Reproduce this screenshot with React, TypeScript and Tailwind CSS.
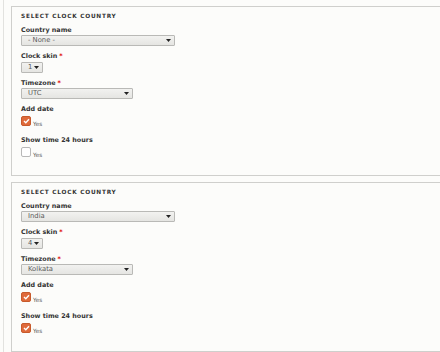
import React from "react";

const font = { fontFamily: '"DejaVu Sans", Verdana, sans-serif' } as const;

function Arrow() {
  return (
    <svg width="5" height="3" viewBox="0 0 5 3" className="shrink-0">
      <path d="M0 0 L5 0 L2.5 3 Z" fill="#222" />
    </svg>
  );
}

function Select({ value, w }: { value: string; w: string }) {
  return (
    <div
      className={`${w} h-[11px] flex items-center justify-between pl-[6px] pr-[3px] border border-[#b9b9b6] rounded-[1px] bg-gradient-to-b from-[#f2f2f0] to-[#e5e5e2] text-[6.8px] leading-[9px] text-[#5a5a5a]`}
    >
      <span>{value}</span>
      <Arrow />
    </div>
  );
}

function Label({ text, req }: { text: string; req?: boolean }) {
  return (
    <div className="h-[10px] leading-[10px] text-[6.4px] font-bold text-[#333]">
      {text}
      {req && <span className="text-[#e01010] ml-[2px]">*</span>}
    </div>
  );
}

function Check({ checked }: { checked: boolean }) {
  return (
    <div className="h-[10px] flex items-end gap-[2px]">
      {checked ? (
        <div className="w-[10px] h-[10px] rounded-[2px] bg-[#df6a3a] border border-[#c75a2c] flex items-center justify-center">
          <svg width="7" height="6" viewBox="0 0 7 6">
            <path d="M1 3 L2.8 4.8 L6 1.2" stroke="#fff" strokeWidth="1.4" fill="none" />
          </svg>
        </div>
      ) : (
        <div className="w-[10px] h-[10px] rounded-[2px] bg-white border border-[#b8b8b8]" />
      )}
      <span className="text-[5.7px] leading-[7px] text-[#555] mb-[-2px]">Yes</span>
    </div>
  );
}

function Fieldset({
  country,
  skin,
  tz,
  addDate,
  show24,
  className,
}: {
  country: string;
  skin: string;
  tz: string;
  addDate: boolean;
  show24: boolean;
  className?: string;
}) {
  return (
    <div className={`w-[440px] border border-[#cfcfcc] bg-[#fcfcfa] pl-[9px] pt-[3px] pb-[18px] ${className ?? ""}`}>
      <div className="h-[12px] leading-[12px] text-[5.8px] font-bold tracking-[0.75px] text-[#333] uppercase">
        Select clock country
      </div>
      <div className="mt-[3px]">
        <Label text="Country name" />
      </div>
      <Select value={country} w="w-[154px]" />
      <div className="mt-[5px]">
        <Label text="Clock skin" req />
      </div>
      <div className="mt-[1px]">
        <Select value={skin} w="w-[22px]" />
      </div>
      <div className="mt-[5px]">
        <Label text="Timezone" req />
      </div>
      <Select value={tz} w="w-[112px]" />
      <div className="mt-[5px]">
        <Label text="Add date" />
      </div>
      <div className="mt-[2px]">
        <Check checked={addDate} />
      </div>
      <div className="mt-[9px]">
        <Label text="Show time 24 hours" />
      </div>
      <div className="mt-[2px]">
        <Check checked={show24} />
      </div>
    </div>
  );
}

export default function App() {
  return (
    <div className="w-[440px] h-[352px] overflow-hidden bg-[#fcfcfa]" style={font}>
      <div className="ml-[3px] h-[352px] border-l border-[#e2e2df] pl-[7px] pt-[6px]">
        <Fieldset country="- None -" skin="1" tz="UTC" addDate={true} show24={false} />
        <Fieldset country="India" skin="4" tz="Kolkata" addDate={true} show24={true} className="mt-[6px]" />
      </div>
    </div>
  );
}
